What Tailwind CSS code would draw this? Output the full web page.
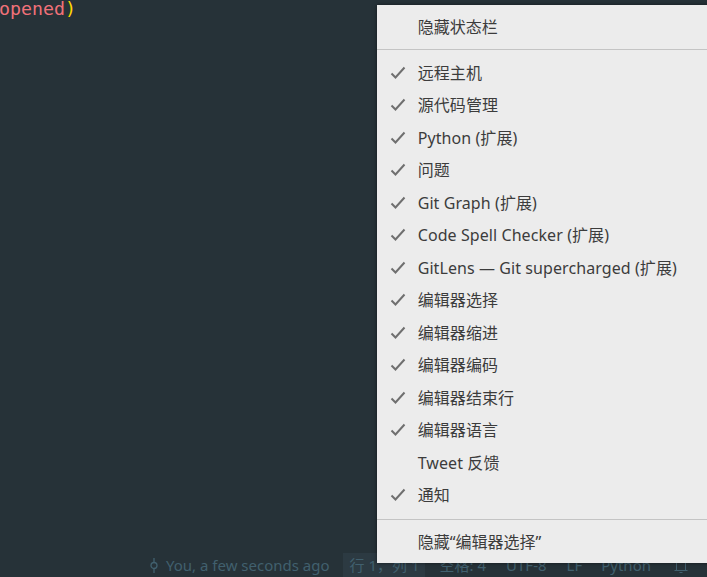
<!DOCTYPE html>
<html lang="zh">
  <head>
    <meta charset="UTF-8" />
    <title>状态栏菜单</title>
    <script src="https://cdn.jsdelivr.net/npm/@tailwindcss/browser@4"></script>
  </head>
  <body class="m-0 overflow-hidden">
    <div class="relative w-[707px] h-[577px] flex flex-col bg-[#263238] font-['Noto_Sans','Noto_Sans_CJK_SC',sans-serif] overflow-hidden">
      <!-- editor -->
      <div class="flex-1 min-h-0 -ml-[1px] -mt-[3px] font-['DejaVu_Sans_Mono',monospace] text-[18.300px] leading-[24px] text-[#f07178] whitespace-pre">opened<span class="text-[#ffd700]">)</span></div>

      <!-- status bar -->
      <div class="h-[24px] flex items-center justify-end text-[15px] text-[#41606e] whitespace-nowrap">
        <div class="flex items-center gap-[7px] mr-[13px]">
          <svg width="10" height="18" viewBox="0 0 10 18" fill="none" stroke="currentColor" stroke-width="1.300"><path d="M5 2v5M5 12v5" /><circle cx="5" cy="9.500" r="3" /></svg>
          <span>You, a few seconds ago</span>
        </div>
        <div class="h-full w-[82px] pl-[7px] flex items-center bg-[#2c3a42] mr-[15px]">行 1，列 1</div>
        <div class="mr-[20px]">空格: 4</div>
        <div class="mr-[20px]">UTF-8</div>
        <div class="mr-[19px]">LF</div>
        <div class="mr-[22px]">Python</div>
        <svg class="mr-[18px]" width="16" height="18" viewBox="0 0 16 18" fill="none" stroke="currentColor"><path d="M1.500 14.500h13M3.500 14.500V7a4.500 4.500 0 0 1 9 0v7.500M6.500 16.500h3" /></svg>
      </div>

      <!-- context menu -->
      <div class="absolute left-[377px] top-[5px] w-[340px] h-[558px] bg-[#ececec] text-[#3c3c3c] text-[16px] shadow-[0_0_4px_rgba(0,0,0,0.5)]">
        <div class="h-[44px] pl-[40.700px] flex items-center">隐藏状态栏</div>
        <div class="h-px bg-[#c4c4c4]"></div>
        <ul class="pt-[6.600px] pb-[7.400px] tracking-[0.08px]">
          <li class="h-[32.500px] flex items-center"><svg class="ml-[13px] mr-[11.700px]" width="16" height="16" viewBox="0 0 16 16" fill="none" stroke="#6f6f6f" stroke-width="2"><path d="M1.500 8.500l4 4 9-10" /></svg>远程主机</li>
          <li class="h-[32.500px] flex items-center"><svg class="ml-[13px] mr-[11.700px]" width="16" height="16" viewBox="0 0 16 16" fill="none" stroke="#6f6f6f" stroke-width="2"><path d="M1.500 8.500l4 4 9-10" /></svg>源代码管理</li>
          <li class="h-[32.500px] flex items-center"><svg class="ml-[13px] mr-[11.700px]" width="16" height="16" viewBox="0 0 16 16" fill="none" stroke="#6f6f6f" stroke-width="2"><path d="M1.500 8.500l4 4 9-10" /></svg>Python (扩展)</li>
          <li class="h-[32.500px] flex items-center"><svg class="ml-[13px] mr-[11.700px]" width="16" height="16" viewBox="0 0 16 16" fill="none" stroke="#6f6f6f" stroke-width="2"><path d="M1.500 8.500l4 4 9-10" /></svg>问题</li>
          <li class="h-[32.500px] flex items-center"><svg class="ml-[13px] mr-[11.700px]" width="16" height="16" viewBox="0 0 16 16" fill="none" stroke="#6f6f6f" stroke-width="2"><path d="M1.500 8.500l4 4 9-10" /></svg>Git Graph (扩展)</li>
          <li class="h-[32.500px] flex items-center"><svg class="ml-[13px] mr-[11.700px]" width="16" height="16" viewBox="0 0 16 16" fill="none" stroke="#6f6f6f" stroke-width="2"><path d="M1.500 8.500l4 4 9-10" /></svg>Code Spell Checker (扩展)</li>
          <li class="h-[32.500px] flex items-center"><svg class="ml-[13px] mr-[11.700px]" width="16" height="16" viewBox="0 0 16 16" fill="none" stroke="#6f6f6f" stroke-width="2"><path d="M1.500 8.500l4 4 9-10" /></svg>GitLens — Git supercharged (扩展)</li>
          <li class="h-[32.500px] flex items-center"><svg class="ml-[13px] mr-[11.700px]" width="16" height="16" viewBox="0 0 16 16" fill="none" stroke="#6f6f6f" stroke-width="2"><path d="M1.500 8.500l4 4 9-10" /></svg>编辑器选择</li>
          <li class="h-[32.500px] flex items-center"><svg class="ml-[13px] mr-[11.700px]" width="16" height="16" viewBox="0 0 16 16" fill="none" stroke="#6f6f6f" stroke-width="2"><path d="M1.500 8.500l4 4 9-10" /></svg>编辑器缩进</li>
          <li class="h-[32.500px] flex items-center"><svg class="ml-[13px] mr-[11.700px]" width="16" height="16" viewBox="0 0 16 16" fill="none" stroke="#6f6f6f" stroke-width="2"><path d="M1.500 8.500l4 4 9-10" /></svg>编辑器编码</li>
          <li class="h-[32.500px] flex items-center"><svg class="ml-[13px] mr-[11.700px]" width="16" height="16" viewBox="0 0 16 16" fill="none" stroke="#6f6f6f" stroke-width="2"><path d="M1.500 8.500l4 4 9-10" /></svg>编辑器结束行</li>
          <li class="h-[32.500px] flex items-center"><svg class="ml-[13px] mr-[11.700px]" width="16" height="16" viewBox="0 0 16 16" fill="none" stroke="#6f6f6f" stroke-width="2"><path d="M1.500 8.500l4 4 9-10" /></svg>编辑器语言</li>
          <li class="h-[32.500px] flex items-center pl-[40.700px]">Tweet 反馈</li>
          <li class="h-[32.500px] flex items-center"><svg class="ml-[13px] mr-[11.700px]" width="16" height="16" viewBox="0 0 16 16" fill="none" stroke="#6f6f6f" stroke-width="2"><path d="M1.500 8.500l4 4 9-10" /></svg>通知</li>
        </ul>
        <div class="h-px bg-[#c4c4c4]"></div>
        <div class="h-[44px] pl-[40.700px] flex items-center">隐藏“编辑器选择”</div>
      </div>
    </div>
  </body>
</html>
